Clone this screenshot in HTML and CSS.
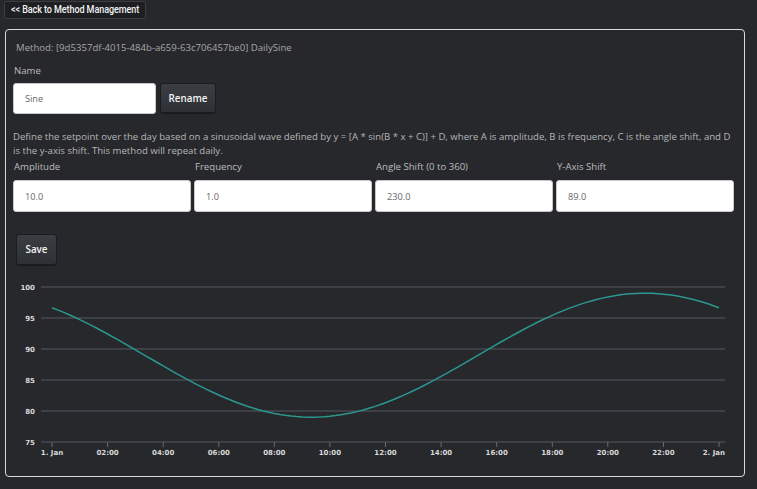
FILE: index.html
```html
<!DOCTYPE html>
<html lang="en">
<head>
<meta charset="utf-8">
<title>Method</title>
<link rel="stylesheet" href="styles.css">
</head>
<body>
<div class="page">
  <button class="back-btn"><span class="back-text">&lt;&lt; Back to Method Management</span></button>
  <div class="card">
    <div class="method">Method: [9d5357df-4015-484b-a659-63c706457be0] DailySine</div>
    <label class="field-label">Name</label>
    <div class="name-row">
      <input class="text-input name-input" type="text" value="Sine">
      <button class="btn rename-btn">Rename</button>
    </div>
    <p class="desc">Define the setpoint over the day based on a sinusoidal wave defined by y = [A * sin(B * x + C)] + D, where A is amplitude, B is frequency, C is the angle shift, and D is the y-axis shift. This method will repeat daily.</p>
    <div class="params">
      <div class="param"><label class="field-label">Amplitude</label><input class="text-input" type="text" value="10.0"></div>
      <div class="param"><label class="field-label">Frequency</label><input class="text-input" type="text" value="1.0"></div>
      <div class="param"><label class="field-label">Angle Shift (0 to 360)</label><input class="text-input" type="text" value="230.0"></div>
      <div class="param"><label class="field-label">Y-Axis Shift</label><input class="text-input" type="text" value="89.0"></div>
    </div>
    <button class="btn save-btn">Save</button>
    <svg class="chart" width="721" height="200" viewBox="0 0 721 200">
      <g class="grid">
        <line x1="28" y1="17" x2="712" y2="17"/>
        <line x1="28" y1="48" x2="712" y2="48"/>
        <line x1="28" y1="79" x2="712" y2="79"/>
        <line x1="28" y1="110" x2="712" y2="110"/>
        <line x1="28" y1="141" x2="712" y2="141"/>
        <line x1="28" y1="172" x2="712" y2="172"/>
      </g>
      <g class="ylabels">
        <text x="22" y="19.5">100</text>
        <text x="22" y="50.5">95</text>
        <text x="22" y="81.5">90</text>
        <text x="22" y="112.5">85</text>
        <text x="22" y="143.5">80</text>
        <text x="22" y="174.5">75</text>
      </g>
      <g class="ticks">
        <line x1="39" y1="172" x2="39" y2="177"/>
        <line x1="94.6" y1="172" x2="94.6" y2="177"/>
        <line x1="150.2" y1="172" x2="150.2" y2="177"/>
        <line x1="205.8" y1="172" x2="205.8" y2="177"/>
        <line x1="261.3" y1="172" x2="261.3" y2="177"/>
        <line x1="316.9" y1="172" x2="316.9" y2="177"/>
        <line x1="372.5" y1="172" x2="372.5" y2="177"/>
        <line x1="428.1" y1="172" x2="428.1" y2="177"/>
        <line x1="483.7" y1="172" x2="483.7" y2="177"/>
        <line x1="539.3" y1="172" x2="539.3" y2="177"/>
        <line x1="594.8" y1="172" x2="594.8" y2="177"/>
        <line x1="650.4" y1="172" x2="650.4" y2="177"/>
        <line x1="706" y1="172" x2="706" y2="177"/>
      </g>
      <g class="xlabels">
        <text x="39" y="185">1. Jan</text>
        <text x="94.6" y="185">02:00</text>
        <text x="150.2" y="185">04:00</text>
        <text x="205.8" y="185">06:00</text>
        <text x="261.3" y="185">08:00</text>
        <text x="316.9" y="185">10:00</text>
        <text x="372.5" y="185">12:00</text>
        <text x="428.1" y="185">14:00</text>
        <text x="483.7" y="185">16:00</text>
        <text x="539.3" y="185">18:00</text>
        <text x="594.8" y="185">20:00</text>
        <text x="650.4" y="185">22:00</text>
        <text class="last" x="712" y="185">2. Jan</text>
      </g>
      <path id="curve" class="curve" d=""/>
    </svg>
  </div>
</div>
<script src="chart.js"></script>
</body>
</html>
```

FILE: chart.js
```js
(function () {
  var amp = 10, freq = 1, shift = 130, base = 89;
  var pxPerHour = 667 / 24, x0 = 39, yTop = 17, pxPerUnit = 6.2;
  var d = "";
  for (var h = 0; h <= 24.0001; h += 0.2) {
    var v = base + amp * Math.sin((shift + 15 * freq * h) * Math.PI / 180);
    var x = x0 + h * pxPerHour;
    var y = yTop + (100 - v) * pxPerUnit;
    d += (d ? " L" : "M") + x.toFixed(2) + " " + y.toFixed(2);
  }
  document.getElementById("curve").setAttribute("d", d);
})();
```

FILE: styles.css
```css
html, body {
  margin: 0;
  padding: 0;
  background: #26282c;
}

body {
  font-family: "Open Sans", "Noto Sans", sans-serif;
  font-size: 9.6px;
  color: #b8b8b8;
}

.page {
  padding: 1px 12px 0 4px;
}

.back-btn {
  display: block;
  box-sizing: border-box;
  height: 18px;
  width: 142px;
  padding: 0 0 0 6px;
  text-align: left;
  background: #1d1f22;
  color: #f2f2f2;
  border: 1px solid #3c3e42;
  border-radius: 2px;
  font-family: "Roboto", sans-serif;
  font-size: 10.5px;
  font-weight: 500;
  line-height: 16px;
  white-space: nowrap;
  overflow: hidden;
}

.back-text {
  display: inline-block;
  transform: scaleX(0.86);
  transform-origin: left center;
  letter-spacing: -0.1px;
}

.card {
  margin: 10px 0 0 1px;
  border: 1px solid #dadada;
  border-radius: 4px;
  padding: 11px 10px 6px 7px;
}

.method {
  line-height: 14px;
  padding-left: 3px;
  color: #a6a6a6;
  margin-bottom: 9px;
}

.field-label {
  display: block;
  line-height: 14px;
  padding-left: 1px;
  color: #bdbdbd;
  margin-bottom: 5px;
}

.name-row {
  display: flex;
  gap: 4px;
  align-items: flex-start;
}

.text-input {
  box-sizing: border-box;
  height: 32px;
  background: #fff;
  border: 1px solid #c8c8c8;
  border-radius: 3px;
  padding: 0 11px;
  font-family: "Open Sans", "Noto Sans", sans-serif;
  font-size: 9.2px;
  color: #666;
  outline: none;
}

.name-input {
  width: 143px;
  height: 31px;
}

.btn {
  box-sizing: border-box;
  height: 30px;
  background: linear-gradient(#3a3d42, #2d3034);
  border: 1px solid #1a1c1f;
  border-radius: 3px;
  box-shadow: 0 1px 1px rgba(0,0,0,0.4);
  color: #f4f4f4;
  font-family: "Open Sans", "Noto Sans", sans-serif;
  font-size: 9.8px;
  font-weight: 600;
  padding: 0;
}

.rename-btn {
  width: 56px;
}

.desc {
  margin: 16px 0 2px 0;
  line-height: 14px;
  color: #b6b6b6;
  font-size: 9.6px;
}

.params {
  display: grid;
  grid-template-columns: repeat(4, 178px);
  gap: 3px;
}

.param .field-label {
  margin-bottom: 6px;
}

.param .text-input {
  width: 178px;
}

.save-btn {
  display: block;
  width: 41px;
  height: 31px;
  margin: 22px 0 0 3px;
}

.chart {
  display: block;
  margin-top: 5px;
  overflow: visible;
}

.grid line {
  stroke: #55585c;
  stroke-width: 1;
}

.ticks line {
  stroke: #6a6c70;
  stroke-width: 1;
}

.ylabels text {
  font-family: "DejaVu Sans", sans-serif;
  font-size: 7px;
  font-weight: bold;
  fill: #d8d8d8;
  text-anchor: end;
}

.xlabels text {
  font-family: "DejaVu Sans", sans-serif;
  font-size: 7px;
  font-weight: bold;
  fill: #d8d8d8;
  text-anchor: middle;
}

.xlabels text.last {
  text-anchor: end;
}

.curve {
  fill: none;
  stroke: #2b978f;
  stroke-width: 1.5;
}
```
